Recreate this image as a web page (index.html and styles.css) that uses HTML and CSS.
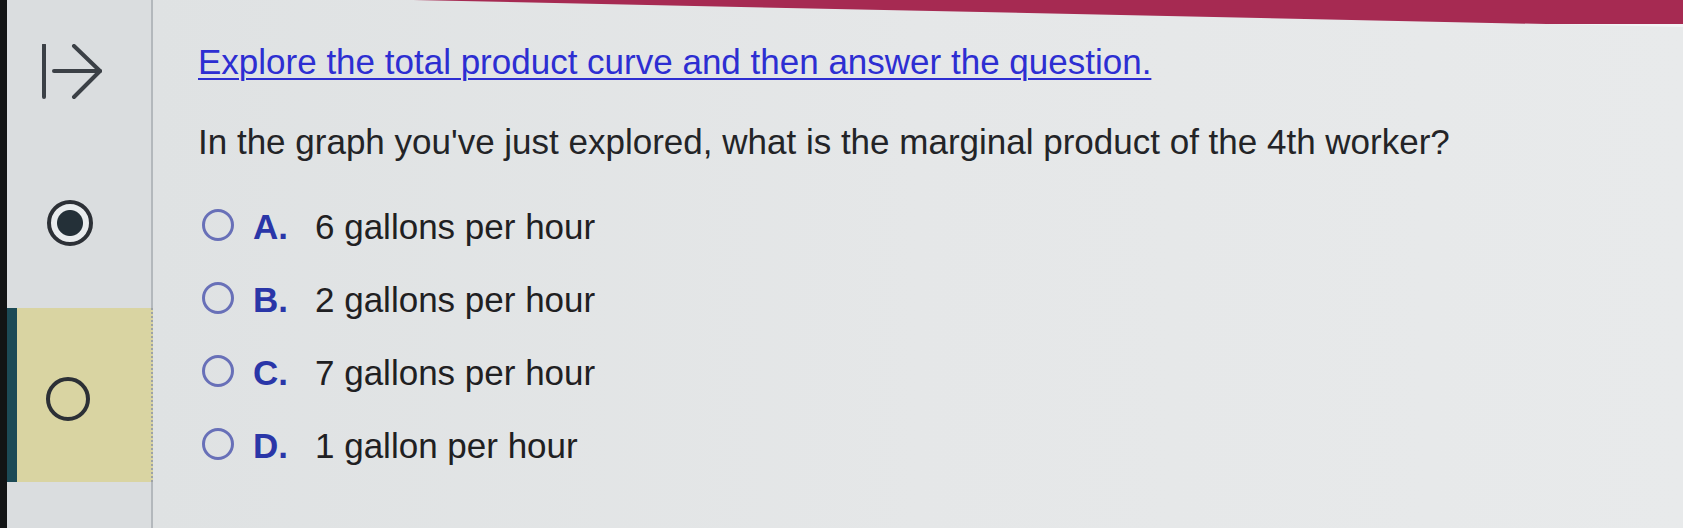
FILE: index.html
```html
<!DOCTYPE html>
<html lang="en">
<head>
<meta charset="utf-8">
<title>Question</title>
<link rel="stylesheet" href="styles.css">
</head>
<body>
<div class="edge"></div>
<nav class="sidebar">
  <div class="side-row side-top">
    <svg class="skip-icon" width="64" height="56" viewBox="0 0 64 56" aria-hidden="true">
      <path d="M3 1 V53" />
      <path d="M13 27 H59" />
      <path d="M33 2 L59 27 L33 53" />
    </svg>
  </div>
  <div class="side-row side-done">
    <span class="side-radio side-radio-filled"></span>
  </div>
  <div class="side-row side-current">
    <span class="side-radio"></span>
  </div>
  <div class="side-row side-rest"></div>
</nav>
<main class="main">
  <a class="title" href="#">Explore the total product curve and then answer the question.</a>
  <p class="question">In the graph you've just explored, what is the marginal product of the 4th worker?</p>
  <ul class="options">
    <li class="option"><span class="circle"></span><span class="label">A.</span><span class="text">6 gallons per hour</span></li>
    <li class="option"><span class="circle"></span><span class="label">B.</span><span class="text">2 gallons per hour</span></li>
    <li class="option"><span class="circle"></span><span class="label">C.</span><span class="text">7 gallons per hour</span></li>
    <li class="option"><span class="circle"></span><span class="label">D.</span><span class="text">1 gallon per hour</span></li>
  </ul>
</main>
</body>
</html>
```

FILE: styles.css
```css
html, body {
  margin: 0;
  padding: 0;
}
body {
  display: flex;
  width: 1683px;
  height: 528px;
  overflow: hidden;
  font-family: "Liberation Sans", Arial, sans-serif;
  background: #e2e5e6;
}
.edge {
  width: 7px;
  flex: none;
  background: #121415;
}
.sidebar {
  width: 144px;
  flex: none;
  display: flex;
  flex-direction: column;
  background: #dadddf;
  border-right: 2px solid #b3b8bc;
}
.side-row {
  display: flex;
  align-items: center;
  box-sizing: border-box;
}
.side-top {
  height: 136px;
  padding-left: 34px;
  padding-top: 8px;
}
.skip-icon path {
  fill: none;
  stroke: #3b4046;
  stroke-width: 4;
  stroke-linecap: round;
  stroke-linejoin: round;
}
.side-done {
  height: 172px;
  padding-left: 40px;
  padding-top: 2px;
}
.side-current {
  height: 174px;
  padding-left: 29px;
  padding-top: 8px;
  background: #d9d4a2;
  border-left: 10px solid #1c4a56;
  border-right: 2px dotted #9ea3a6;
  margin-right: -2px;
}
.side-rest {
  flex: 1;
}
.side-radio {
  width: 44px;
  height: 44px;
  box-sizing: border-box;
  border: 4px solid #2c3036;
  border-radius: 50%;
  display: block;
}
.side-radio-filled {
  width: 46px;
  height: 46px;
  background: radial-gradient(circle, #243038 0 12.5px, #e9ecee 13.5px 100%);
}
.main {
  flex: 1;
  position: relative;
  box-sizing: border-box;
  padding: 42px 0 0 45px;
  background: linear-gradient(90deg, #dfe2e3 0%, #e5e7e8 50%, #e8eaeb 100%);
}
.main::before {
  content: "";
  position: absolute;
  top: 0;
  left: 0;
  right: 0;
  height: 27px;
  background: linear-gradient(180deg, #a62a52 0 24px, #f2f3f5 24px 27px);
  clip-path: polygon(260px 0, 100% 0, 100% 27px);
}
.title {
  display: block;
  width: max-content;
  font-size: 35px;
  line-height: 40px;
  color: #2d2ed2;
  text-decoration: underline;
  text-decoration-thickness: 2px;
  text-underline-offset: 4px;
}
.question {
  margin: 40px 0 0;
  font-size: 35px;
  line-height: 40px;
  color: #232427;
}
.options {
  list-style: none;
  margin: 28px 0 0;
  padding: 0;
}
.option {
  display: flex;
  align-items: center;
  height: 73px;
  font-size: 35px;
  line-height: 40px;
}
.circle {
  width: 32px;
  height: 32px;
  box-sizing: border-box;
  border: 3px solid #6870b8;
  border-radius: 50%;
  margin-left: 4px;
  margin-bottom: 4px;
  flex: none;
}
.label {
  width: 62px;
  margin-left: 19px;
  font-weight: bold;
  color: #2a36a8;
}
.text {
  color: #1f2022;
}
```
